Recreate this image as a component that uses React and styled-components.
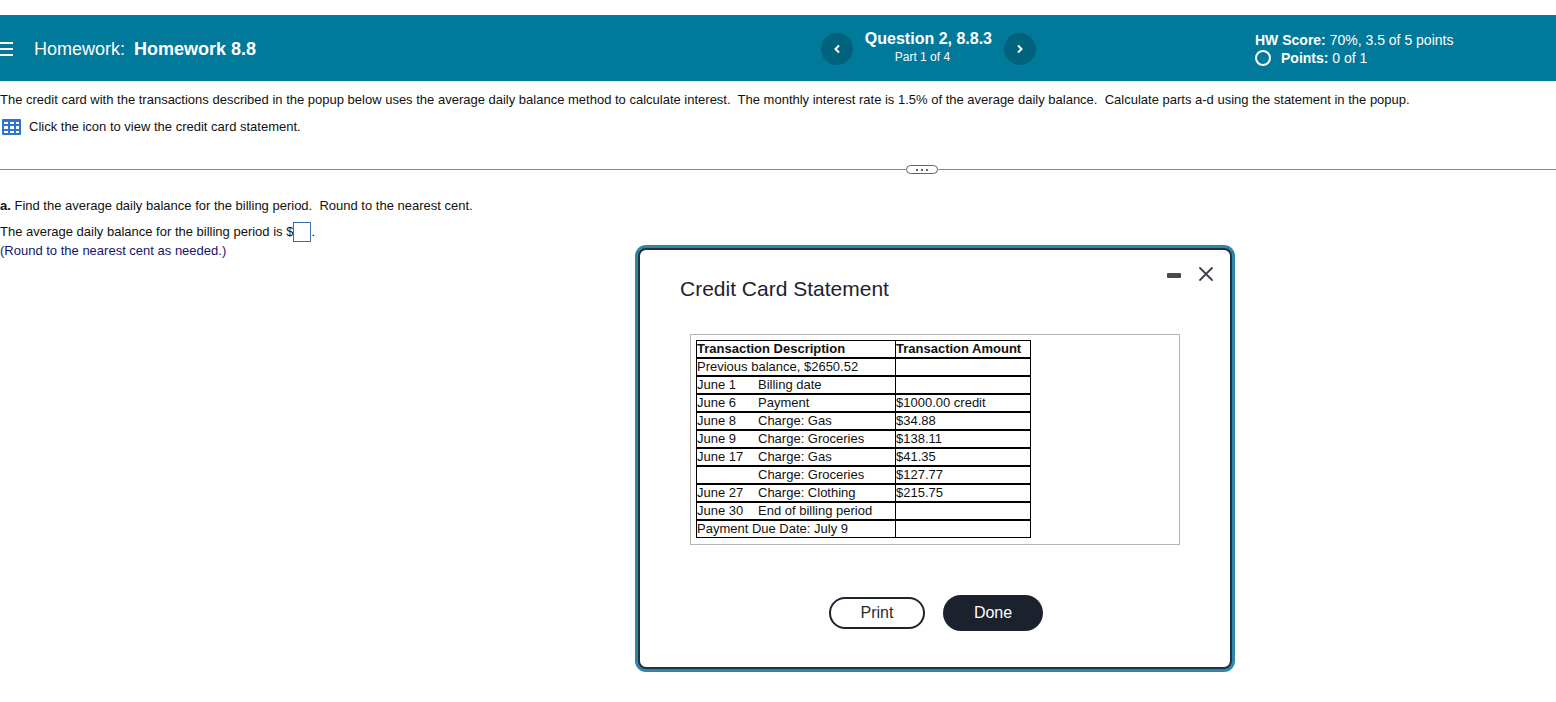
import React, { useState } from 'react';
import { styled, createGlobalStyle } from 'styled-components';

const rows = [
  { text: 'Previous balance, $2650.52', amount: '' },
  { date: 'June 1', text: 'Billing date', amount: '' },
  { date: 'June 6', text: 'Payment', amount: '$1000.00 credit' },
  { date: 'June 8', text: 'Charge: Gas', amount: '$34.88' },
  { date: 'June 9', text: 'Charge: Groceries', amount: '$138.11' },
  { date: 'June 17', text: 'Charge: Gas', amount: '$41.35' },
  { date: '', text: 'Charge: Groceries', amount: '$127.77' },
  { date: 'June 27', text: 'Charge: Clothing', amount: '$215.75' },
  { date: 'June 30', text: 'End of billing period', amount: '' },
  { text: 'Payment Due Date: July 9', amount: '' },
];

function StatementDialog({ onClose }) {
  return (
    <Dialog role="dialog" aria-labelledby="dialogTitle">
      <WindowControls>
        <IconButton type="button" aria-label="Minimize">
          <svg width="14" height="16" viewBox="0 0 14 16">
            <rect x="0" y="7" width="14" height="5" rx="1" fill="#4a4a50" />
          </svg>
        </IconButton>
        <IconButton type="button" aria-label="Close" onClick={onClose}>
          <svg width="16" height="16" viewBox="0 0 16 16">
            <path
              d="M2 2 14 14M14 2 2 14"
              stroke="#3d3f50"
              strokeWidth="1.8"
              strokeLinecap="round"
            />
          </svg>
        </IconButton>
      </WindowControls>
      <DialogTitle id="dialogTitle">Credit Card Statement</DialogTitle>
      <StatementBox>
        <Statement>
          <thead>
            <tr>
              <HeadCell $width="199px">Transaction Description</HeadCell>
              <HeadCell $width="135px">Transaction Amount</HeadCell>
            </tr>
          </thead>
          <tbody>
            {rows.map((row) => (
              <tr key={`${row.date}${row.text}`}>
                <Cell>
                  {row.date !== undefined && <DateLabel>{row.date}</DateLabel>}
                  {row.text}
                </Cell>
                <Cell>{row.amount}</Cell>
              </tr>
            ))}
          </tbody>
        </Statement>
      </StatementBox>
      <Actions>
        <PrintButton type="button">Print</PrintButton>
        <DoneButton type="button" onClick={onClose}>
          Done
        </DoneButton>
      </Actions>
    </Dialog>
  );
}

function Chevron({ next }) {
  return (
    <svg width="8" height="10" viewBox="0 0 8 10" fill="none">
      <path
        d={next ? 'M2 1.5 5.5 5 2 8.5' : 'M6 1.5 2.5 5 6 8.5'}
        stroke="#fff"
        strokeWidth="2"
      />
    </svg>
  );
}

function App() {
  const [open, setOpen] = useState(true);
  const [answer, setAnswer] = useState('');

  return (
    <Page>
      <GlobalStyle />
      <Header>
        <MenuButton type="button" aria-label="Menu">
          <svg width="13" height="14" viewBox="0 0 13 14">
            <path d="M0 1h13M0 7h13M0 13h13" stroke="#fff" strokeWidth="2" />
          </svg>
        </MenuButton>
        <Title>
          Homework: <strong>Homework 8.8</strong>
        </Title>
        <QuestionNav>
          <RoundButton type="button" aria-label="Previous question">
            <Chevron />
          </RoundButton>
          <Question>
            <QuestionName>Question 2, 8.8.3</QuestionName>
            <QuestionPart>Part 1 of 4</QuestionPart>
          </Question>
          <RoundButton type="button" aria-label="Next question">
            <Chevron next />
          </RoundButton>
        </QuestionNav>
        <Score>
          <div>
            <b>HW Score:</b> 70%, 3.5 of 5 points
          </div>
          <Points>
            <Ring />
            <span>
              <b>Points:</b> 0 of 1
            </span>
          </Points>
        </Score>
      </Header>

      <Intro>
        <Text>
          The credit card with the transactions described in the popup below
          uses the average daily balance method to calculate interest.&nbsp; The
          monthly interest rate is 1.5% of the average daily balance.&nbsp;
          Calculate parts a-d using the statement in the popup.
        </Text>
        <StatementLink type="button" onClick={() => setOpen(true)}>
          <svg width="19" height="16" viewBox="0 0 19 16">
            <rect width="19" height="16" rx="1" fill="#2b74d0" />
            <path
              d="M2 3h4v2H2zM8 3h4v2H8zM14 3h3v2h-3zM2 7h4v3H2zM8 7h4v3H8zM14 7h3v3h-3zM2 12h4v2H2zM8 12h4v2H8zM14 12h3v2h-3z"
              fill="#fff"
            />
          </svg>
          Click the icon to view the credit card statement.
        </StatementLink>
      </Intro>

      <Divider>
        <Rule />
        <Handle type="button" aria-label="Resize panels">
          <svg width="14" height="2" viewBox="0 0 14 2">
            <path d="M1 0h2v2H1zM6 0h2v2H6zM11 0h2v2h-2z" fill="#5b6670" />
          </svg>
        </Handle>
        <Rule $width="618px" />
      </Divider>

      <Exercise>
        <Text>
          <b>a.</b> Find the average daily balance for the billing
          period.&nbsp; Round to the nearest cent.
        </Text>
        <AnswerRow>
          <label htmlFor="answer">
            The average daily balance for the billing period is $
          </label>
          <AnswerInput
            id="answer"
            value={answer}
            onChange={(e) => setAnswer(e.target.value)}
          />
          <span>.</span>
        </AnswerRow>
        <Hint>(Round to the nearest cent as needed.)</Hint>
      </Exercise>

      {open && <StatementDialog onClose={() => setOpen(false)} />}
    </Page>
  );
}

const GlobalStyle = createGlobalStyle`
  * {
    box-sizing: border-box;
  }

  body {
    margin: 0;
    background-color: #fff;
    color: #111;
    font-family: 'Liberation Sans', Arial, sans-serif;
    font-size: 13px;
    line-height: 16px;
  }

  button, input {
    padding: 0;
    border: none;
    background: none;
    color: inherit;
    font: inherit;
  }

  button {
    cursor: pointer;
  }

  svg {
    display: block;
  }
`;

const Page = styled.main`
  position: relative;
  min-height: 100vh;
  padding-top: 15px;
`;

const Header = styled.header`
  display: flex;
  align-items: center;
  height: 66px;
  padding-top: 2px;
  background-color: #00799b;
  color: #fff;
`;

const MenuButton = styled.button`
  margin-right: 21px;
`;

const Title = styled.h1`
  flex: 1;
  margin: 0;
  font-size: 18px;
  font-weight: 400;
  line-height: 24px;

  strong {
    margin-left: 4px;
  }
`;

const QuestionNav = styled.nav`
  display: flex;
  align-items: center;
  gap: 12px;
`;

const RoundButton = styled.button`
  display: flex;
  align-items: center;
  justify-content: center;
  width: 32px;
  height: 32px;
  border-radius: 50%;
  background-color: #00627d;
`;

const Question = styled.div`
  display: flex;
  flex-direction: column;
  gap: 1px;
  padding-bottom: 3px;
`;

const QuestionName = styled.div`
  font-size: 16px;
  font-weight: 700;
  line-height: 18px;
`;

const QuestionPart = styled.div`
  padding-right: 12px;
  font-size: 12px;
  text-align: center;
`;

const Score = styled.div`
  width: 301px;
  margin-left: 219px;
  font-size: 14px;
  line-height: 18px;
`;

const Points = styled.div`
  display: flex;
  align-items: center;
  gap: 10px;
`;

const Ring = styled.span`
  width: 16px;
  height: 16px;
  border: 2px solid #fff;
  border-radius: 50%;
`;

const Intro = styled.section`
  display: flex;
  flex-direction: column;
  align-items: flex-start;
  gap: 11px;
  padding: 11px 0 30px;
`;

const Text = styled.p`
  margin: 0;
`;

const StatementLink = styled.button`
  display: flex;
  align-items: center;
  gap: 8px;
  padding-left: 2px;
`;

const Divider = styled.div`
  display: flex;
  align-items: center;
`;

const Rule = styled.div`
  flex: ${({ $width }) => ($width ? `0 0 ${$width}` : '1')};
  height: 1px;
  background-color: #858b91;
`;

const Handle = styled.button`
  display: flex;
  align-items: center;
  justify-content: center;
  width: 32px;
  height: 9px;
  border: 1px solid #5b6670;
  border-radius: 5px;
`;

const Exercise = styled.section`
  display: flex;
  flex-direction: column;
  padding-top: 24px;
`;

const AnswerRow = styled.div`
  display: flex;
  align-items: center;
  margin-top: 8px;
`;

const AnswerInput = styled.input`
  width: 18px;
  height: 20px;
  border: 1px solid #3b6ea5;
  background-color: #fff;
`;

const Hint = styled.p`
  margin: 1px 0 0;
  color: #14146e;
`;

const Dialog = styled.section`
  position: absolute;
  top: 248px;
  left: 638px;
  width: 594px;
  padding: 16px 50px 36px;
  border: 2px solid #22303f;
  border-radius: 8px;
  background-color: #fff;
  box-shadow: 0 0 0 3px #2f87a8;
`;

const WindowControls = styled.div`
  display: flex;
  justify-content: flex-end;
  gap: 17px;
  margin-right: -34px;
`;

const IconButton = styled.button`
  height: 16px;
`;

const DialogTitle = styled.h2`
  margin: -5px 0 0 -10px;
  color: #1c2233;
  font-size: 21px;
  font-weight: 400;
  line-height: 24px;
`;

const StatementBox = styled.div`
  margin-top: 33px;
  padding: 5px 5px 6px;
  border: 1px solid #b5b5b5;
`;

const Statement = styled.table`
  border-right: 1px solid #000;
  border-collapse: separate;
  border-spacing: 0;
  table-layout: fixed;
`;

const Cell = styled.td`
  height: 18px;
  padding: 0;
  border: 1px solid #000;
  border-right: none;
`;

const HeadCell = styled(Cell).attrs({ as: 'th', scope: 'col' })`
  width: ${({ $width }) => $width};
  text-align: left;
`;

const DateLabel = styled.span`
  display: inline-block;
  width: 61px;
`;

const Actions = styled.div`
  display: flex;
  align-items: center;
  justify-content: center;
  gap: 18px;
  margin-top: 50px;
  padding-left: 2px;
  font-size: 16px;
`;

const PrintButton = styled.button`
  width: 96px;
  height: 32px;
  border: 2px solid #1d2430;
  border-radius: 16px;
  color: #252c38;
`;

const DoneButton = styled.button`
  width: 100px;
  height: 36px;
  border-radius: 18px;
  background-color: #1c212e;
  color: #fff;
`;

export default App;
